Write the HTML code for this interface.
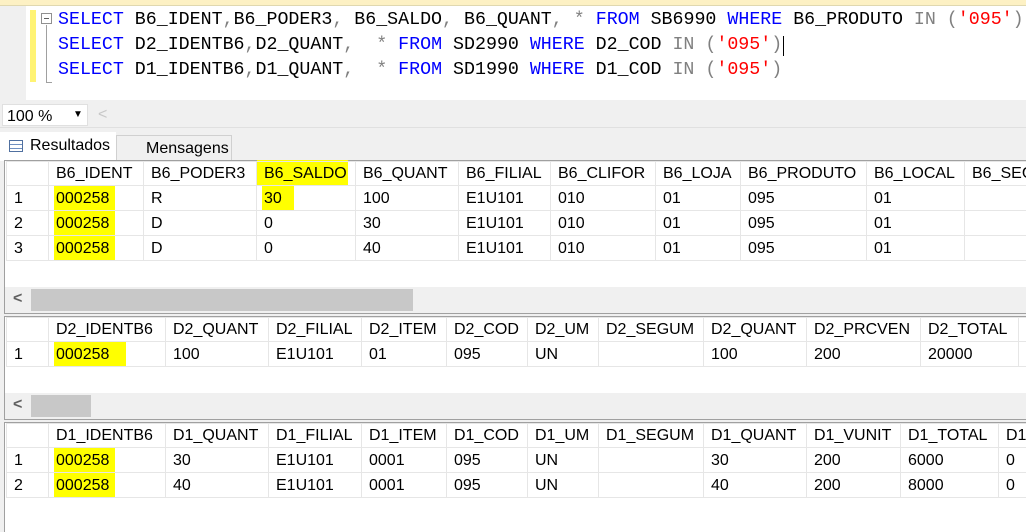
<!DOCTYPE html>
<html><head><meta charset="utf-8"><style>
*{margin:0;padding:0;box-sizing:border-box}
body{width:1026px;height:532px;overflow:hidden;background:#f0f0f0;position:relative;font-family:"Liberation Sans",sans-serif}
.ab{position:absolute}
.code{font-family:"Liberation Mono",monospace;font-size:18.3px;line-height:25px;white-space:pre;color:#000}
.k{color:#0000ff}.g{color:#808080}.s{color:#ff0000}
table{position:absolute;border-collapse:collapse;table-layout:fixed;font-size:16px;color:#000;background:#fff}
td{border:1px solid #e6e6e6;height:25px;padding:1px 0 0 7px;white-space:nowrap;overflow:hidden;vertical-align:middle}
tr:first-child td{height:24px}
.panel{position:absolute;left:4px;width:1022px;background:#fff;border-left:1px solid #a0a0a0;border-top:1px solid #a0a0a0}
.sb{position:absolute;left:5px;width:1021px;height:26px;background:#f0f0f0}
.th{position:absolute;top:2px;height:22px;background:#c8c8c8;left:26px}
.arr{position:absolute;left:8px;top:3px;font-size:16px;color:#606060;font-weight:bold}
.y{background:#ff0;padding:4px 6px 4px 2px;margin-left:-2px}
</style></head><body>
<div class="ab" style="left:0;top:0;width:1026px;height:6px;background:#fdf1c4;border-bottom:1px solid #e0d8b0"></div>
<div class="ab" style="left:0;top:6px;width:26px;height:94px;background:#f0f0f0"></div>
<div class="ab" style="left:26px;top:6px;width:1000px;height:94px;background:#fff"></div>
<div class="ab" style="left:30px;top:10px;width:6px;height:72px;background:#fff373"></div>
<div class="ab" style="left:41px;top:13px;width:11px;height:11px;border:1px solid #909090;background:#fff"></div>
<div class="ab" style="left:44px;top:18px;width:5px;height:1px;background:#606060"></div>
<div class="ab" style="left:46px;top:25px;width:1px;height:58px;background:#a0a0a0"></div>
<div class="ab" style="left:46px;top:82px;width:6px;height:1px;background:#a0a0a0"></div>
<div class="ab code" style="left:58px;top:8px"><span class="k">SELECT</span> B6_IDENT<span class="g">,</span>B6_PODER3<span class="g">,</span> B6_SALDO<span class="g">,</span> B6_QUANT<span class="g">,</span> <span class="g">*</span> <span class="k">FROM</span> SB6990 <span class="k">WHERE</span> B6_PRODUTO <span class="g">IN (</span><span class="s">'095'</span><span class="g">)</span>
<span class="k">SELECT</span> D2_IDENTB6<span class="g">,</span>D2_QUANT<span class="g">,</span>  <span class="g">*</span> <span class="k">FROM</span> SD2990 <span class="k">WHERE</span> D2_COD <span class="g">IN (</span><span class="s">'095'</span><span class="g">)</span>
<span class="k">SELECT</span> D1_IDENTB6<span class="g">,</span>D1_QUANT<span class="g">,</span>  <span class="g">*</span> <span class="k">FROM</span> SD1990 <span class="k">WHERE</span> D1_COD <span class="g">IN (</span><span class="s">'095'</span><span class="g">)</span></div>
<div class="ab" style="left:783px;top:36px;width:1px;height:20px;background:#000"></div>
<div class="ab" style="left:2px;top:104px;width:86px;height:22px;background:#fff;border:1px solid #e0e0e0;font-size:16px;padding:3px 0 0 4px">100 %<span style="position:absolute;left:70px;top:4px;font-size:10px">▼</span></div>
<div class="ab" style="left:98px;top:106px;color:#c8c8c8;font-size:16px">&lt;</div>
<div class="ab" style="left:0;top:127px;width:1026px;height:1px;background:#e0e0e0"></div>
<div class="ab" style="left:0;top:132px;width:116px;height:29px;background:#fff;font-size:16px;padding:5px 0 0 30px">Resultados</div>
<div class="ab" style="left:9px;top:140px;width:14px;height:12px;border:1px solid #5070a0;background:repeating-linear-gradient(#fff 0 3px,#7090c0 3px 4px)"></div>
<div class="ab" style="left:116px;top:135px;width:116px;height:26px;background:#f0f0f0;border:1px solid #d0d0d0;font-size:16px;padding:4px 0 0 29px">Mensagens</div>
<div class="panel" style="top:160px;height:154px"></div>
<div class="ab" style="left:257px;top:160px;width:91px;height:26px;background:#ff0"></div>
<table style="left:6px;top:161px;width:1030px;background:transparent">
<colgroup><col style="width:42px"><col style="width:95px"><col style="width:113px"><col style="width:99px"><col style="width:103px"><col style="width:92px"><col style="width:105px"><col style="width:85px"><col style="width:126px"><col style="width:98px"><col style="width:72px"></colgroup>
<tr><td></td><td>B6_IDENT</td><td>B6_PODER3</td><td>B6_SALDO</td><td>B6_QUANT</td><td>B6_FILIAL</td><td>B6_CLIFOR</td><td>B6_LOJA</td><td>B6_PRODUTO</td><td>B6_LOCAL</td><td>B6_SEGUM</td></tr>
<tr><td>1</td><td><span class="y">000258</span></td><td>R</td><td><span class="y" style="padding-right:12px">30</span></td><td>100</td><td>E1U101</td><td>010</td><td>01</td><td>095</td><td>01</td><td></td></tr>
<tr><td>2</td><td><span class="y">000258</span></td><td>D</td><td>0</td><td>30</td><td>E1U101</td><td>010</td><td>01</td><td>095</td><td>01</td><td></td></tr>
<tr><td>3</td><td><span class="y">000258</span></td><td>D</td><td>0</td><td>40</td><td>E1U101</td><td>010</td><td>01</td><td>095</td><td>01</td><td></td></tr>
</table>
<div class="sb" style="top:287px"><span class="arr">&lt;</span><div class="th" style="width:382px"></div></div>
<div class="ab" style="left:4px;top:313px;width:1022px;height:1px;background:#a0a0a0"></div>
<div class="panel" style="top:316px;height:104px"></div>
<table style="left:6px;top:317px;width:1040px">
<colgroup><col style="width:42px"><col style="width:117px"><col style="width:103px"><col style="width:93px"><col style="width:85px"><col style="width:81px"><col style="width:71px"><col style="width:105px"><col style="width:103px"><col style="width:114px"><col style="width:98px"><col style="width:28px"></colgroup>
<tr><td></td><td>D2_IDENTB6</td><td>D2_QUANT</td><td>D2_FILIAL</td><td>D2_ITEM</td><td>D2_COD</td><td>D2_UM</td><td>D2_SEGUM</td><td>D2_QUANT</td><td>D2_PRCVEN</td><td>D2_TOTAL</td><td></td></tr>
<tr><td>1</td><td><span class="y" style="padding-right:17px">000258</span></td><td>100</td><td>E1U101</td><td>01</td><td>095</td><td>UN</td><td></td><td>100</td><td>200</td><td>20000</td><td></td></tr>
</table>
<div class="sb" style="top:393px"><span class="arr">&lt;</span><div class="th" style="width:60px"></div></div>
<div class="ab" style="left:4px;top:419px;width:1022px;height:1px;background:#a0a0a0"></div>
<div class="panel" style="top:422px;height:110px"></div>
<table style="left:6px;top:423px;width:1040px">
<colgroup><col style="width:42px"><col style="width:117px"><col style="width:103px"><col style="width:93px"><col style="width:85px"><col style="width:81px"><col style="width:71px"><col style="width:105px"><col style="width:103px"><col style="width:94px"><col style="width:98px"><col style="width:48px"></colgroup>
<tr><td></td><td>D1_IDENTB6</td><td>D1_QUANT</td><td>D1_FILIAL</td><td>D1_ITEM</td><td>D1_COD</td><td>D1_UM</td><td>D1_SEGUM</td><td>D1_QUANT</td><td>D1_VUNIT</td><td>D1_TOTAL</td><td>D1_</td></tr>
<tr><td>1</td><td><span class="y">000258</span></td><td>30</td><td>E1U101</td><td>0001</td><td>095</td><td>UN</td><td></td><td>30</td><td>200</td><td>6000</td><td>0</td></tr>
<tr><td>2</td><td><span class="y">000258</span></td><td>40</td><td>E1U101</td><td>0001</td><td>095</td><td>UN</td><td></td><td>40</td><td>200</td><td>8000</td><td>0</td></tr>
</table>
</body></html>
